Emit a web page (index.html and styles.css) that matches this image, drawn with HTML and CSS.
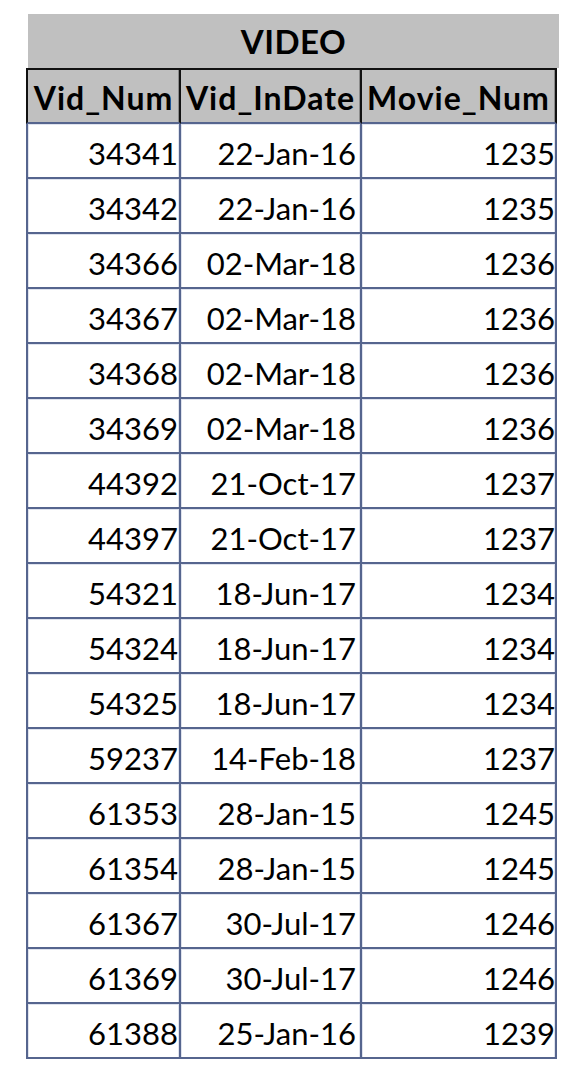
FILE: index.html
```html
<!DOCTYPE html>
<html>
<head>
<meta charset="utf-8">
<link rel="stylesheet" href="styles.css">
</head>
<body>
<div class="sheet">
  <div class="title">VIDEO</div>
  <table class="grid">
    <thead>
      <tr>
        <th class="c1">Vid_Num</th>
        <th class="c2">Vid_InDate</th>
        <th class="c3">Movie_Num</th>
      </tr>
    </thead>
    <tbody>
      <tr><td class="c1">34341</td><td class="c2">22-Jan-16</td><td class="c3">1235</td></tr>
      <tr><td class="c1">34342</td><td class="c2">22-Jan-16</td><td class="c3">1235</td></tr>
      <tr><td class="c1">34366</td><td class="c2">02-Mar-18</td><td class="c3">1236</td></tr>
      <tr><td class="c1">34367</td><td class="c2">02-Mar-18</td><td class="c3">1236</td></tr>
      <tr><td class="c1">34368</td><td class="c2">02-Mar-18</td><td class="c3">1236</td></tr>
      <tr><td class="c1">34369</td><td class="c2">02-Mar-18</td><td class="c3">1236</td></tr>
      <tr><td class="c1">44392</td><td class="c2">21-Oct-17</td><td class="c3">1237</td></tr>
      <tr><td class="c1">44397</td><td class="c2">21-Oct-17</td><td class="c3">1237</td></tr>
      <tr><td class="c1">54321</td><td class="c2">18-Jun-17</td><td class="c3">1234</td></tr>
      <tr><td class="c1">54324</td><td class="c2">18-Jun-17</td><td class="c3">1234</td></tr>
      <tr><td class="c1">54325</td><td class="c2">18-Jun-17</td><td class="c3">1234</td></tr>
      <tr><td class="c1">59237</td><td class="c2">14-Feb-18</td><td class="c3">1237</td></tr>
      <tr><td class="c1">61353</td><td class="c2">28-Jan-15</td><td class="c3">1245</td></tr>
      <tr><td class="c1">61354</td><td class="c2">28-Jan-15</td><td class="c3">1245</td></tr>
      <tr><td class="c1">61367</td><td class="c2">30-Jul-17</td><td class="c3">1246</td></tr>
      <tr><td class="c1">61369</td><td class="c2">30-Jul-17</td><td class="c3">1246</td></tr>
      <tr><td class="c1">61388</td><td class="c2">25-Jan-16</td><td class="c3">1239</td></tr>
    </tbody>
  </table>
</div>
</body>
</html>
```
FILE: styles.css
```css
html, body {
  margin: 0;
  padding: 0;
  background: #ffffff;
}

body {
  font-family: Lato, "Liberation Sans", sans-serif;
  color: #000;
}

.sheet {
  padding: 14px 0 0 26px;
  width: 537px;
}

.title {
  margin-left: 2px;
  width: 531px;
  height: 54px;
  line-height: 54px;
  background: #c0c0c0;
  text-align: center;
  font-weight: 700;
  font-size: 33px;
  letter-spacing: 0.5px;
}

.grid {
  border-collapse: separate;
  border-spacing: 0;
  table-layout: fixed;
  width: 531px;
  font-size: 31px;
}

.grid th,
.grid td {
  padding: 0;
  white-space: nowrap;
  overflow: hidden;
  box-sizing: border-box;
}

.grid th {
  background: #c0c0c0;
  font-weight: 700;
  font-size: 32px;
  letter-spacing: 1px;
  text-align: center;
  height: 56px;
  padding-top: 4px;
  line-height: 48px;
  border-top: 2px solid #111;
  border-right: 2px solid #111;
  border-bottom: 2px solid #56658e;
  box-shadow: inset -1px 0 0 #8a8a8a;
}

.grid th.c1 {
  border-left: 2px solid #111;
}

.grid td {
  text-align: right;
  height: 55px;
  padding-top: 5px;
  line-height: 48px;
  font-weight: 400;
  border-right: 2px solid #56658e;
  border-bottom: 2px solid #56658e;
  box-shadow: inset 1px 1px 0 #dfe3ee, inset -1px 0 0 #dfe3ee;
}

.grid td.c1 {
  border-left: 2px solid #56658e;
}

.grid .c1 {
  width: 155px;
}

.grid .c2 {
  width: 181px;
}

.grid .c3 {
  width: 195px;
}

.grid td.c1 {
  padding-right: 1px;
}

.grid td.c2 {
  padding-right: 4px;
}

.grid td.c3 {
  padding-right: 0;
}
```
